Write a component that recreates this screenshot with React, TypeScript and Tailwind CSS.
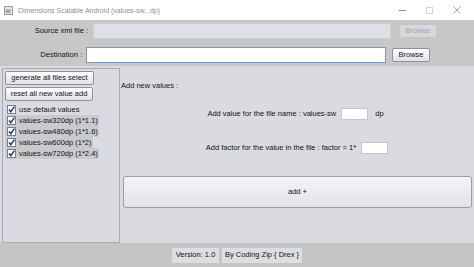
import * as React from "react";

const font = { fontFamily: '"Liberation Sans", Arial, sans-serif' };

function Check() {
  return (
    <svg width="9" height="9" viewBox="0 0 9 9" className="shrink-0">
      <rect x="0.5" y="0.5" width="8" height="8" fill="#ffffff" stroke="#7a7f88" />
      <path d="M2 4.5 L3.8 6.6 L7.4 1.6" fill="none" stroke="#1f3f8f" strokeWidth="1.6" />
    </svg>
  );
}

function CheckRow({ label, shaded }: { label: string; shaded?: boolean }) {
  return (
    <div className="h-[11px] flex items-center">
      <div className={`h-[11px] flex items-center gap-[3px] pl-[2px] pr-[1px] ${shaded ? "bg-[#c9cacd]" : ""}`}>
        <Check />
        <span className="text-[7.5px] text-[#141414] leading-none whitespace-nowrap">{label}</span>
      </div>
    </div>
  );
}

function SmallButton({ children, disabled }: { children: React.ReactNode; disabled?: boolean }) {
  return (
    <div
      className={`h-[14px] flex items-center justify-center border rounded-[2px] text-[7.5px] leading-none whitespace-nowrap ${
        disabled
          ? "border-[#c2c4c8] bg-[#d6d8dc] text-[#a3a6ab]"
          : "border-[#8e9196] bg-gradient-to-b from-[#ffffff] to-[#dfe1e5] text-[#141414]"
      }`}
    >
      {children}
    </div>
  );
}

export default function App() {
  return (
    <div className="w-[474px] h-[267px] flex flex-col bg-[#d9dbe1] overflow-hidden text-[#141414]" style={font}>
      {/* title bar */}
      <div className="h-[20px] bg-white flex items-center shrink-0">
        <svg width="9" height="9" viewBox="0 0 9 9" className="ml-[4px]">
          <rect x="0.5" y="0.5" width="8" height="8" fill="#e4e4e4" stroke="#9a9a9a" />
          <path d="M2 6.5 h4 v-2.5 h-4 z M6 4.5 h1" fill="#b0b0b0" stroke="#8a8a8a" strokeWidth="0.6" />
        </svg>
        <span className="ml-[5px] text-[7px] text-[#8f8f8f] leading-none">Dimensions Scalable Android (values-sw...dp)</span>
        <div className="ml-auto flex items-center">
          <div className="w-[27px] flex justify-center">
            <div className="w-[7px] h-px bg-[#8a8a8a]" />
          </div>
          <div className="w-[27px] flex justify-center">
            <div className="w-[7px] h-[7px] border border-[#d2d2d2]" />
          </div>
          <div className="w-[27px] flex justify-center mr-[4px]">
            <svg width="8" height="8" viewBox="0 0 8 8">
              <path d="M0.5 0.5 L7.5 7.5 M7.5 0.5 L0.5 7.5" stroke="#8a8a8a" strokeWidth="0.8" />
            </svg>
          </div>
        </div>
      </div>

      {/* file choosers */}
      <div className="h-[46px] bg-[#c7c7c7] shrink-0 flex flex-col pt-[3px] gap-[8px]">
        <div className="h-[16px] flex items-center">
          <div className="w-[88px] text-right text-[7.5px] leading-none">Source xml file :</div>
          <div className="ml-[5px] w-[298px] h-[16px] bg-[#dde1e6] border border-[#cdd1d6]" />
          <div className="ml-[8px] w-[38px]">
            <SmallButton disabled>Browse</SmallButton>
          </div>
        </div>
        <div className="h-[16px] flex items-center">
          <div className="w-[82px] text-right text-[7.5px] leading-none">Destination :</div>
          <div className="ml-[4px] w-[300px] h-[16px] bg-white border border-[#7c9ab5]" />
          <div className="ml-[6px] w-[38px]">
            <SmallButton>Browse</SmallButton>
          </div>
        </div>
      </div>

      {/* main */}
      <div className="flex-1 flex pl-[2px] pt-[2px]">
        <div className="w-[118px] border border-[#a7aab0] flex flex-col pt-[2px] pl-[2px] gap-[2px]">
          <div className="w-[89px]">
            <SmallButton>generate all files select</SmallButton>
          </div>
          <div className="w-[88px]">
            <SmallButton>reset all new value add</SmallButton>
          </div>
          <div className="flex flex-col pt-[1px]">
            <CheckRow label="use default values" />
            <CheckRow label="values-sw320dp (1*1.1)" shaded />
            <CheckRow label="values-sw480dp (1*1.6)" shaded />
            <CheckRow label="values-sw600dp (1*2)" shaded />
            <CheckRow label="values-sw720dp (1*2.4)" shaded />
          </div>
        </div>

        <div className="flex-1 flex flex-col pt-[13px]">
          <div className="h-[10px] flex items-center pl-[1px] text-[7.5px] leading-none">Add new values :</div>
          <div className="mt-[17px] h-[12px] flex items-center justify-center text-[7.5px] leading-none">
            <span>Add value for the file name : values-sw</span>
            <div className="ml-[5px] w-[27px] h-[12px] bg-white border border-[#c4c8ce]" />
            <span className="ml-[7px]">dp</span>
            <span className="w-[3px]" />
          </div>
          <div className="mt-[22px] h-[12px] flex items-center justify-center text-[7.5px] leading-none">
            <span>Add factor for the value in the file : factor = 1*</span>
            <div className="ml-[5px] w-[27px] h-[12px] bg-white border border-[#c4c8ce]" />
          </div>
          <div className="mt-[22px] ml-[3px] mr-[2px] h-[32px] flex items-center justify-center border border-[#9a9ea5] rounded-[3px] bg-gradient-to-b from-[#f3f4f6] to-[#e1e3e7] text-[7.5px] leading-none">
            add +
          </div>
        </div>
      </div>

      {/* footer */}
      <div className="h-[24px] bg-[#c5c5c5] shrink-0 flex items-center justify-center gap-[3px]">
        <div className="w-[47px] h-[15px] bg-[#dcdee2] flex items-center justify-center text-[7.5px] leading-none">Version: 1.0</div>
        <div className="w-[80px] h-[15px] bg-[#dcdee2] flex items-center justify-center text-[7.5px] leading-none">By Coding Zip {"{"} Drex {"}"}</div>
      </div>
    </div>
  );
}
